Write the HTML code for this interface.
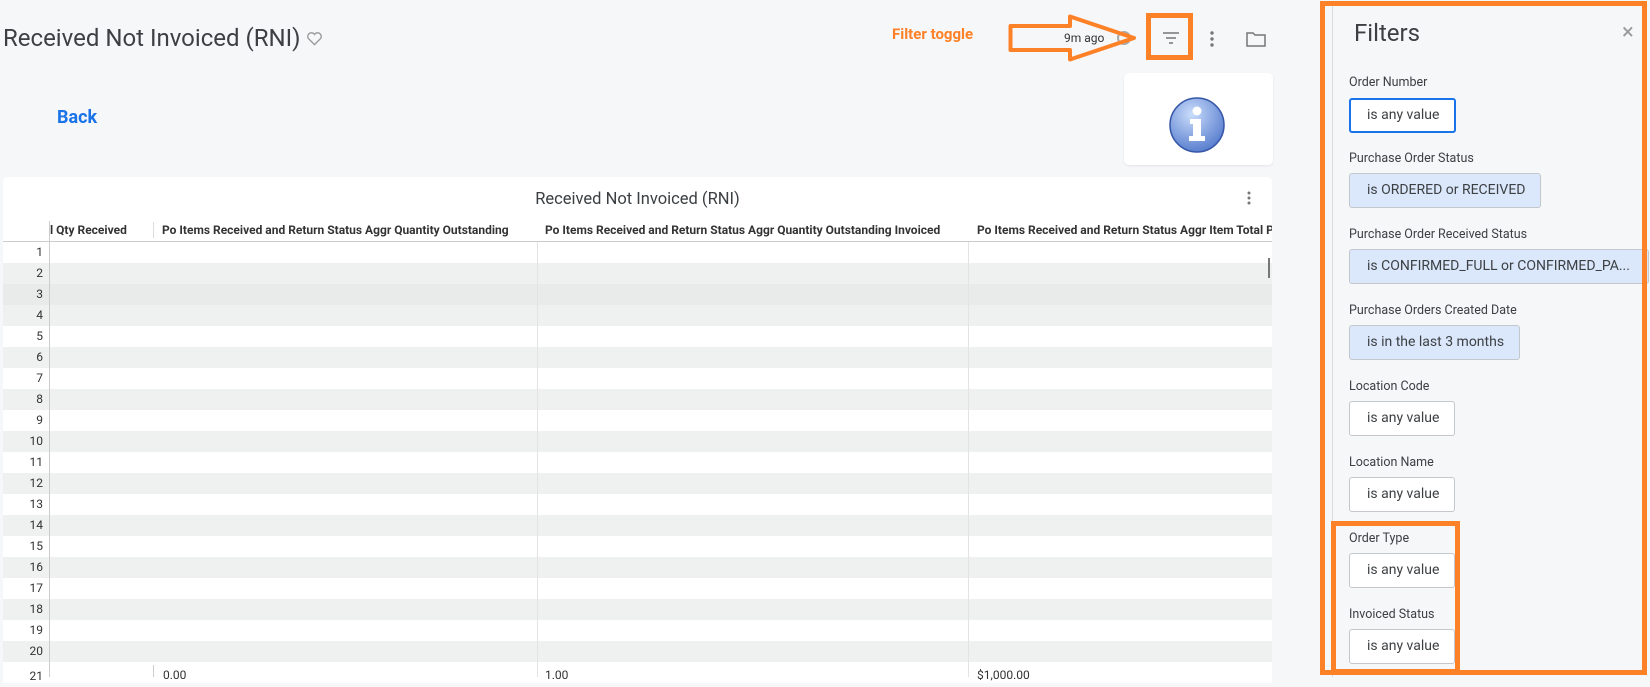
<!DOCTYPE html>
<html><head><meta charset="utf-8"><style>
*{box-sizing:border-box;margin:0;padding:0}
body{width:1650px;height:677px;overflow:hidden;background:#f6f7f9;font-family:"Roboto","Liberation Sans",sans-serif;color:#3c4043;position:relative}
.a{position:absolute}
.or{border:5px solid #fd8127}
.lbl{position:absolute;left:1349px;font-size:12.5px;color:#3c4043}
.box{position:absolute;left:1349px;height:35px;border:1px solid #c4c7cb;border-radius:3px;background:#fff;font-size:14px;line-height:33px;padding-left:17px;color:#3c4043;white-space:nowrap;overflow:hidden}
.blue{background:#dbe8fb}
.row{position:absolute;left:3px;width:1269px;height:21px}
.rn{position:absolute;left:0;width:40px;text-align:right;font-size:12px;line-height:21px;color:#333}
.hd{position:absolute;top:223px;font-size:12px;font-weight:bold;color:#333;white-space:nowrap}
</style></head><body>
<div class="a" style="left:3px;top:24px;font-size:24px;color:#3c4043">Received Not Invoiced (RNI)</div>
<svg class="a" style="left:306px;top:31px" width="17" height="15" viewBox="0 0 24 22"><path d="M12 20 L3 11 A5 5 0 0 1 12 5 A5 5 0 0 1 21 11 Z" fill="none" stroke="#999" stroke-width="2"/></svg>
<div class="a" style="left:57px;top:107px;font-size:18px;font-weight:bold;color:#1a73e8">Back</div>
<div class="a" style="left:892px;top:25px;font-size:15px;font-weight:bold;color:#fd8127">Filter toggle</div>
<div class="a" style="left:1064px;top:31px;font-size:12px;color:#333">9m ago</div>
<div class="a" style="left:1117px;top:31px;width:14px;height:14px;border:2px solid #aaa;border-radius:50%"></div>
<svg class="a" style="left:1008px;top:14px" width="130" height="48" viewBox="0 0 130 48"><path d="M2.5 12 H62 V2.5 L126 24 L62 45.5 V36 H2.5 Z" fill="none" stroke="#fd8127" stroke-width="4" stroke-linejoin="round"/></svg>
<div class="a or" style="left:1146px;top:13px;width:47px;height:47px"></div>
<svg class="a" style="left:1162px;top:31px" width="18" height="14"><path d="M1 2h16M4 7h10M7 12h4" stroke="#777" stroke-width="1.6"/></svg>
<svg class="a" style="left:1208px;top:30px" width="8" height="18"><circle cx="4" cy="3" r="1.7" fill="#777"/><circle cx="4" cy="9" r="1.7" fill="#777"/><circle cx="4" cy="15" r="1.7" fill="#777"/></svg>
<svg class="a" style="left:1246px;top:31px" width="20" height="16"><path d="M1 2h6l2 2h10v11H1z" fill="none" stroke="#777" stroke-width="1.5"/></svg>
<div class="a" style="left:1124px;top:73px;width:149px;height:92px;background:#fff;border-radius:5px;box-shadow:0 1px 2px rgba(0,0,0,.08)"></div>
<svg class="a" style="left:1167px;top:97px" width="60" height="56" viewBox="0 0 60 56"><defs><radialGradient id="g" cx=".4" cy=".3" r=".8"><stop offset="0" stop-color="#c9dcfb"/><stop offset="1" stop-color="#4c73c9"/></radialGradient></defs><circle cx="30" cy="28" r="27" fill="url(#g)" stroke="#3657a8" stroke-width="1.5"/><circle cx="30" cy="14" r="4.5" fill="#fff"/><path d="M23 22h11v17h4v5H22v-5h4V27h-3z" fill="#fff"/></svg>
<div class="a" style="left:3px;top:177px;width:1269px;height:500px;background:#fff;border-radius:5px 5px 0 0"></div>
<div class="a" style="left:3px;top:190px;width:1269px;text-align:center;font-size:16.5px;color:#3c4043">Received Not Invoiced (RNI)</div>
<svg class="a" style="left:1245px;top:190px" width="8" height="16"><circle cx="4" cy="3" r="1.5" fill="#777"/><circle cx="4" cy="8" r="1.5" fill="#777"/><circle cx="4" cy="13" r="1.5" fill="#777"/></svg>
<div class="hd" style="left:50px">l Qty Received</div>
<div class="a" style="left:153px;top:222px;width:1px;height:16px;background:#ddd"></div>
<div class="hd" style="left:162px">Po Items Received and Return Status Aggr Quantity Outstanding</div>
<div class="hd" style="left:545px">Po Items Received and Return Status Aggr Quantity Outstanding Invoiced</div>
<div class="hd" style="left:977px;width:295px;overflow:hidden">Po Items Received and Return Status Aggr Item Total P</div>
<div class="a" style="left:3px;top:241px;width:1269px;height:1px;background:#ccc"></div>
<div id="rows"></div>
<div class="a" style="left:49px;top:221px;width:1px;height:456px;background:#ccc"></div>
<div class="a" style="left:537px;top:242px;width:1px;height:435px;background:#e3e3e3"></div>
<div class="a" style="left:968px;top:242px;width:1px;height:435px;background:#e3e3e3"></div>
<div class="a" style="left:153px;top:665px;width:1px;height:12px;background:#ccc"></div>
<div class="a" style="left:163px;top:668px;font-size:12px;color:#333">0.00</div>
<div class="a" style="left:545px;top:668px;font-size:12px;color:#333">1.00</div>
<div class="a" style="left:977px;top:668px;font-size:12px;color:#333">$1,000.00</div>
<div class="a" style="left:1268px;top:258px;width:2px;height:20px;background:#777"></div>
<div class="a" style="left:1332px;top:6px;width:1px;height:671px;background:#dcdcdc"></div>
<div class="a" style="left:1354px;top:19px;font-size:24px;color:#3c4043">Filters</div>
<div class="a" style="left:1622px;top:20px;font-size:22px;color:#999">×</div>
<div class="lbl" style="top:75px">Order Number</div>
<div class="box" style="top:98px;width:107px;border:2px solid #1a73e8;line-height:31px;padding-left:16px">is any value</div>
<div class="lbl" style="top:151px">Purchase Order Status</div>
<div class="box blue" style="top:173px;width:192px">is ORDERED or RECEIVED</div>
<div class="lbl" style="top:227px">Purchase Order Received Status</div>
<div class="box blue" style="top:249px;width:300px">is CONFIRMED_FULL or CONFIRMED_PA...</div>
<div class="lbl" style="top:303px">Purchase Orders Created Date</div>
<div class="box blue" style="top:325px;width:171px">is in the last 3 months</div>
<div class="lbl" style="top:379px">Location Code</div>
<div class="box" style="top:401px;width:106px">is any value</div>
<div class="lbl" style="top:455px">Location Name</div>
<div class="box" style="top:477px;width:106px">is any value</div>
<div class="lbl" style="top:531px">Order Type</div>
<div class="box" style="top:553px;width:106px">is any value</div>
<div class="lbl" style="top:607px">Invoiced Status</div>
<div class="box" style="top:629px;width:106px">is any value</div>
<div class="a or" style="left:1320px;top:1px;width:327px;height:674px"></div>
<div class="a or" style="left:1331px;top:521px;width:129px;height:153px"></div>
<script>
var h='';for(var i=1;i<=20;i++){var bg=i==3?'#e9eaea':(i%2==0?'#eff0f0':'#fff');h+='<div class="row" style="top:'+(242+(i-1)*21)+'px;background:'+bg+'"><div class="rn">'+i+'</div></div>';}
h+='<div class="row" style="top:662px;background:#fff"><div class="rn" style="top:4px">21</div></div>';
document.getElementById('rows').innerHTML=h;
</script>
</body></html>
